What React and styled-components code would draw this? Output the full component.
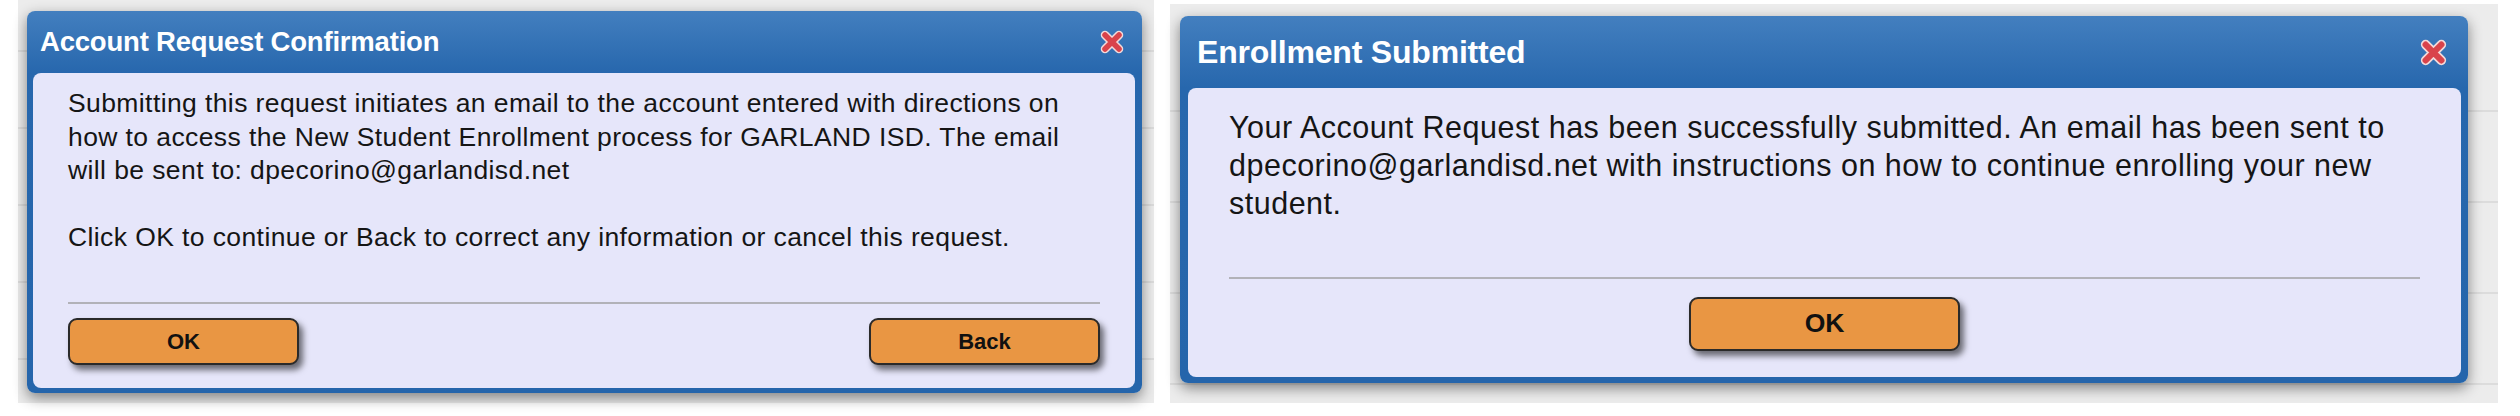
import React from "react";
import styled, { createGlobalStyle, ThemeProvider } from "styled-components";

const GlobalStyle = createGlobalStyle`
  * {
    box-sizing: border-box;
  }
  body {
    margin: 0;
    background: #ffffff;
    font-family: "Liberation Sans", Arial, Helvetica, sans-serif;
  }
`;

// two sizes of the same dialog (second screenshot was taken a bit larger)
const sizes = {
  sm: {
    width: 1115,
    titleSize: 27.5,
    titleBar: 62,
    titlePad: 13,
    closeSize: 24,
    closeRight: 18,
    inset: "0 7px 5px 6px",
    pad: "14px 35px 23px",
    textSize: 26.5,
    letter: 0.4,
    lineHeight: 33.5,
    dividerGap: 47.5,
    buttonGap: 14,
    buttonW: 231,
    buttonH: 47,
    buttonFont: 22,
  },
  lg: {
    width: 1288,
    titleSize: 32,
    titleBar: 72,
    titlePad: 17,
    closeSize: 27,
    closeRight: 21,
    inset: "0 7px 6px 8px",
    pad: "19.6px 41px 26px",
    textSize: 30.5,
    letter: 0.5,
    lineHeight: 38,
    dividerGap: 55.4,
    buttonGap: 18,
    buttonW: 271,
    buttonH: 54,
    buttonFont: 26.5,
  },
};

const Dialog = ({ size, title, children, buttons, align }) => (
  <ThemeProvider theme={sizes[size]}>
    <Window>
      <TitleBar>
        <Title>{title}</Title>
        <CloseIcon />
      </TitleBar>
      <Panel>
        <Message>{children}</Message>
        <Divider />
        <ButtonRow $align={align}>
          {buttons.map((label) => (
            <Button key={label} type="button">
              {label}
            </Button>
          ))}
        </ButtonRow>
      </Panel>
    </Window>
  </ThemeProvider>
);

const CloseIcon = () => (
  <CloseSvg viewBox="0 0 24 24">
    <g strokeLinecap="round" fill="none">
      <path d="M5 5 L19 19 M19 5 L5 19" stroke="#f3dada" strokeWidth="8.5" />
      <path d="M5 5 L19 19 M19 5 L5 19" stroke="#d9434b" strokeWidth="5.5" />
    </g>
  </CloseSvg>
);

const App = () => {
  return (
    <>
      <GlobalStyle />
      <Page>
        <Backdrop $pad="11px 12px 10px 9px" $rows={77} $offset={50}>
          <Dialog size="sm" title="Account Request Confirmation" buttons={["OK", "Back"]} align="space-between">
            <p>
              Submitting this request initiates an email to the account entered with directions on how to access the
              New Student Enrollment process for GARLAND ISD. The email will be sent to: dpecorino@garlandisd.net
            </p>
            <p>Click OK to continue or Back to correct any information or cancel this request.</p>
          </Dialog>
        </Backdrop>
        <Backdrop $pad="12px 30px 20px 10px" $rows={91} $offset={106} $top={4}>
          <Dialog size="lg" title="Enrollment Submitted" buttons={["OK"]} align="center">
            <p>
              Your Account Request has been successfully submitted. An email has been sent to dpecorino@garlandisd.net
              with instructions on how to continue enrolling your new student.
            </p>
          </Dialog>
        </Backdrop>
      </Page>
    </>
  );
};

export default App;

const Page = styled.div`
  display: flex;
  align-items: flex-start;
  gap: 16px;
  width: 2520px;
  height: 416px;
  padding-left: 18px;
`;

const Backdrop = styled.div`
  display: flex;
  margin-top: ${({ $top }) => $top || 0}px;
  padding: ${({ $pad }) => $pad};
  background-color: #ececec;
  background-image: repeating-linear-gradient(
    to bottom,
    transparent 0,
    transparent ${({ $rows }) => $rows - 2}px,
    #dcdcdc ${({ $rows }) => $rows - 2}px,
    #dcdcdc ${({ $rows }) => $rows}px
  );
  background-position: 0 ${({ $offset, $rows }) => $offset - $rows + 2}px;
`;

const Window = styled.div`
  display: flex;
  flex-direction: column;
  width: ${({ theme }) => theme.width}px;
  border-radius: 8px;
  background: linear-gradient(
    to bottom,
    #437fbf 0,
    #2767ad ${({ theme }) => theme.titleBar}px,
    #2565ab 100%
  );
  box-shadow: 0 5px 14px rgba(0, 0, 0, 0.45);
`;

const TitleBar = styled.div`
  display: flex;
  align-items: center;
  justify-content: space-between;
  height: ${({ theme }) => theme.titleBar}px;
  padding: 0 ${({ theme }) => theme.closeRight}px 0 ${({ theme }) => theme.titlePad}px;
`;

const Title = styled.h2`
  margin: 0;
  color: #ffffff;
  font-size: ${({ theme }) => theme.titleSize}px;
  font-weight: 700;
  letter-spacing: -0.2px;
`;

const CloseSvg = styled.svg`
  width: ${({ theme }) => theme.closeSize}px;
  height: ${({ theme }) => theme.closeSize}px;
  cursor: pointer;
`;

const Panel = styled.div`
  display: flex;
  flex-direction: column;
  margin: ${({ theme }) => theme.inset};
  padding: ${({ theme }) => theme.pad};
  border-radius: 8px;
  background: #e6e6fa;
`;

const Message = styled.div`
  display: flex;
  flex-direction: column;
  gap: ${({ theme }) => theme.lineHeight}px;
  color: #151515;
  font-size: ${({ theme }) => theme.textSize}px;
  line-height: ${({ theme }) => theme.lineHeight}px;
  letter-spacing: ${({ theme }) => theme.letter}px;

  p {
    margin: 0;
  }
`;

const Divider = styled.div`
  height: 2px;
  margin-top: ${({ theme }) => theme.dividerGap}px;
  background: #b2b2b8;
`;

const ButtonRow = styled.div`
  display: flex;
  justify-content: ${({ $align }) => $align};
  margin-top: ${({ theme }) => theme.buttonGap}px;
`;

const Button = styled.button`
  width: ${({ theme }) => theme.buttonW}px;
  height: ${({ theme }) => theme.buttonH}px;
  border: 2px solid #2a2a2a;
  border-radius: 9px;
  background: #e99643;
  box-shadow: 4px 5px 6px rgba(0, 0, 0, 0.55);
  color: #111111;
  font-family: "Liberation Sans", Arial, Helvetica, sans-serif;
  font-size: ${({ theme }) => theme.buttonFont}px;
  font-weight: 700;
  cursor: pointer;
`;
